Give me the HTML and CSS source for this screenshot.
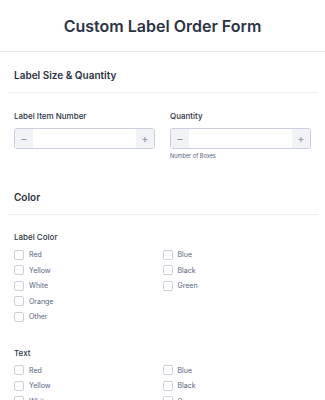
FILE: index.html
```html
<!DOCTYPE html>
<html lang="en">
<head>
  <meta charset="UTF-8">
  <meta name="viewport" content="width=device-width, initial-scale=1.0">
  <title>Custom Label Order Form</title>
  <link rel="stylesheet" href="styles.css">
</head>
<body>

  <header class="form-header">
    <h1>Custom Label Order Form</h1>
  </header>

  <div class="form">
    <h2 class="section-head">Label Size &amp; Quantity</h2>

    <div class="field-row">
      <div class="field">
        <label class="field-label">Label Item Number</label>
        <div class="spinner">
          <button class="spin-btn">&minus;</button>
          <input type="text" class="spin-input">
          <button class="spin-btn">+</button>
        </div>
      </div>
      <div class="field">
        <label class="field-label">Quantity</label>
        <div class="spinner">
          <button class="spin-btn">&minus;</button>
          <input type="text" class="spin-input">
          <button class="spin-btn">+</button>
        </div>
        <div class="sublabel">Number of Boxes</div>
      </div>
    </div>

    <h2 class="section-head section-gap">Color</h2>

    <div class="check-field">
      <div class="field-label">Label Color</div>
      <div class="check-grid">
        <div class="check-col">
          <label class="check"><span class="box"></span>Red</label>
          <label class="check"><span class="box"></span>Yellow</label>
          <label class="check"><span class="box"></span>White</label>
          <label class="check"><span class="box"></span>Orange</label>
          <label class="check"><span class="box"></span>Other</label>
        </div>
        <div class="check-col">
          <label class="check"><span class="box"></span>Blue</label>
          <label class="check"><span class="box"></span>Black</label>
          <label class="check"><span class="box"></span>Green</label>
        </div>
      </div>
    </div>

    <div class="check-field">
      <div class="field-label">Text</div>
      <div class="check-grid">
        <div class="check-col">
          <label class="check"><span class="box"></span>Red</label>
          <label class="check"><span class="box"></span>Yellow</label>
          <label class="check"><span class="box"></span>White</label>
          <label class="check"><span class="box"></span>Orange</label>
          <label class="check"><span class="box"></span>Other</label>
        </div>
        <div class="check-col">
          <label class="check"><span class="box"></span>Blue</label>
          <label class="check"><span class="box"></span>Black</label>
          <label class="check"><span class="box"></span>Green</label>
        </div>
      </div>
    </div>
  </div>

</body>
</html>
```

FILE: styles.css
```css
body {
  font-family: Inter, 'Noto Sans', sans-serif;
  background: #fff;
  color: #2c3345;
  margin: 0;
  padding: 0;
  overflow: hidden;
}
.form-header {
  height: 51px;
  display: flex;
  align-items: center;
  justify-content: center;
  border-bottom: 1px solid #e8eaf1;
}
h1 {
  margin: 0;
  font-size: 16px;
  font-weight: 600;
  color: #2c3345;
}
.form {
  padding: 0 7px;
}
.section-head {
  margin: 0;
  padding: 16px 7px 10px;
  font-size: 10px;
  line-height: 14px;
  font-weight: 600;
  border-bottom: 1px solid #eceef4;
}
.section-gap {
  margin-top: 13px;
}
.field-row {
  display: grid;
  grid-template-columns: minmax(0, 1fr) minmax(0, 1fr);
  gap: 15px;
  padding: 17px 7px 0;
}
.field-label {
  display: block;
  font-size: 8px;
  line-height: 12px;
  font-weight: 500;
  color: #2c3345;
}
.spinner {
  display: flex;
  height: 21px;
  margin-top: 6px;
  border: 1px solid #c9cfdc;
  border-radius: 3px;
  overflow: hidden;
  box-sizing: border-box;
}
.spin-btn {
  width: 18px;
  border: none;
  padding: 0;
  background: #f2f3f7;
  color: #8a91a5;
  font-family: inherit;
  font-size: 11px;
}
.spin-input {
  flex: 1;
  min-width: 0;
  border: none;
  padding: 0;
}
.sublabel {
  margin-top: 3px;
  font-size: 5.6px;
  line-height: 9px;
  color: #57647e;
}
.check-field {
  padding: 16px 7px 0;
}
.check-field + .check-field {
  padding-top: 22px;
}
.check-grid {
  display: grid;
  grid-template-columns: 1fr 1fr;
  margin-top: 4px;
}
.check {
  display: flex;
  align-items: center;
  height: 15.5px;
  font-size: 7px;
  color: #57647e;
}
.box {
  width: 10px;
  height: 10px;
  margin-right: 5px;
  border: 1px solid #c9cfdc;
  border-radius: 2px;
  box-sizing: border-box;
}
```
